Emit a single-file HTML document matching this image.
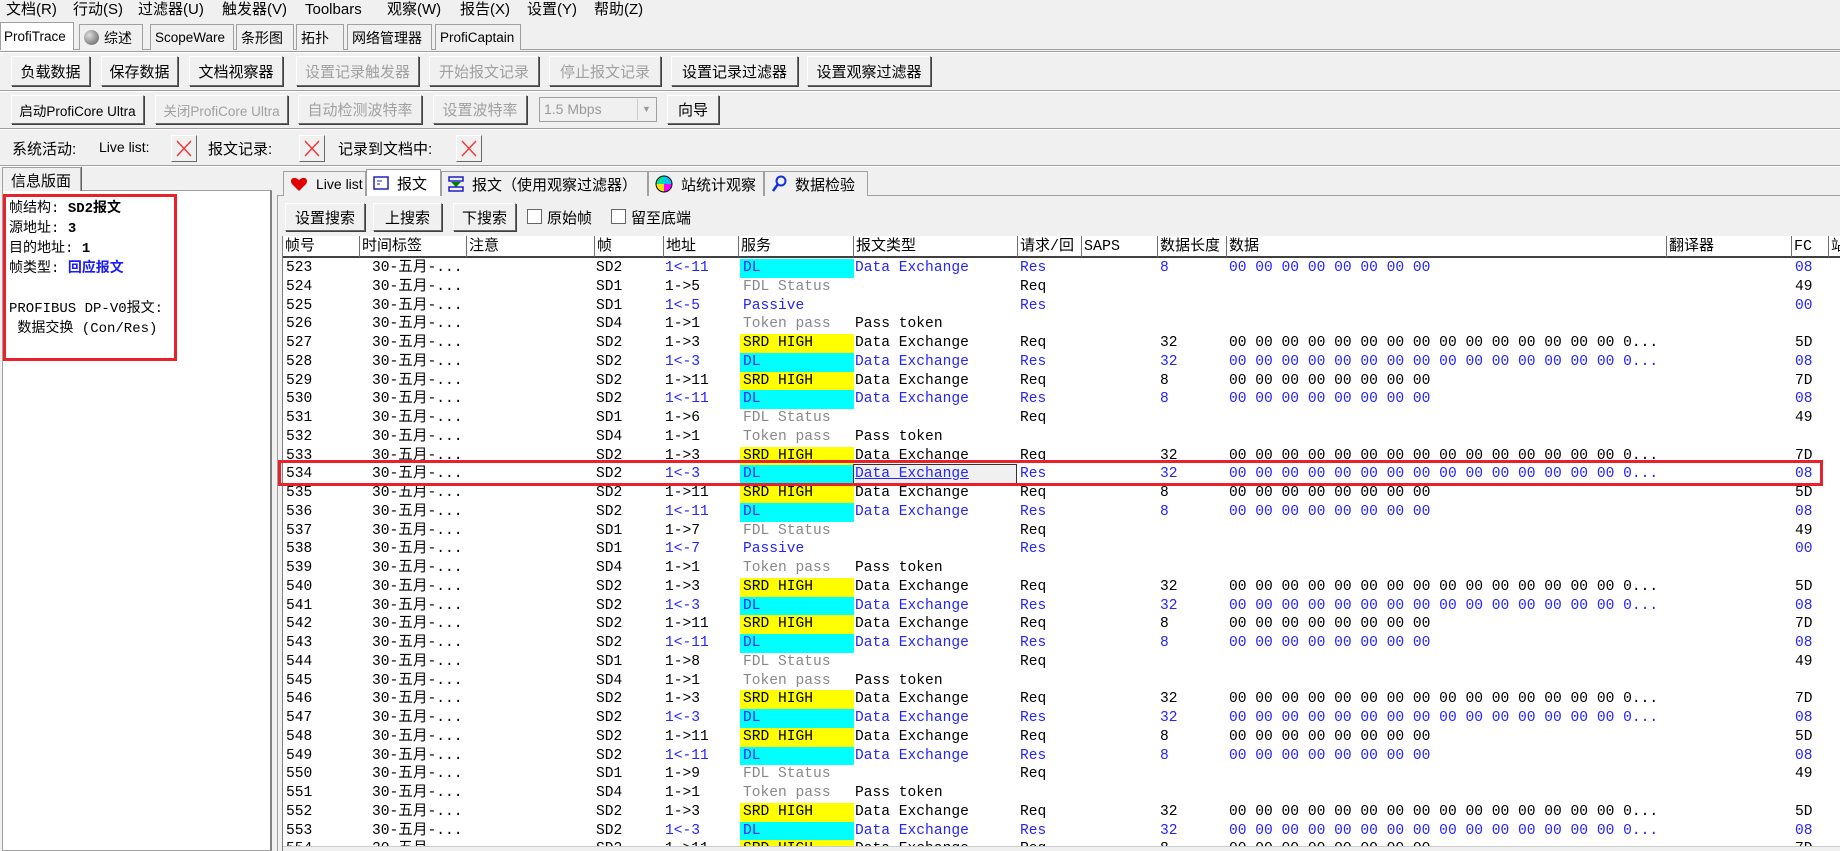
<!DOCTYPE html>
<html><head><meta charset="utf-8">
<style>
*{margin:0;padding:0;box-sizing:border-box}
body{width:1840px;height:851px;overflow:hidden;background:#f0f0f0;position:relative;font-family:"Liberation Sans","Noto Sans CJK SC",sans-serif;font-size:15px;color:#000}
.a{position:absolute;white-space:nowrap}
.mn{position:absolute;top:0;line-height:20px;font-size:15px;white-space:nowrap}
.btn{position:absolute;border:1px solid;border-color:#fff #696969 #696969 #fff;box-shadow:1px 1px 0 #404040;background:#f0f0f0;display:flex;align-items:center;justify-content:center;font-size:15px}
.dis{color:#a0a0a0}
.sep{position:absolute;left:0;width:1840px;height:2px;border-top:1px solid #a0a0a0;border-bottom:1px solid #fff}
.tab{position:absolute;top:24px;height:26px;border:1px solid #a0a0a0;border-bottom:none;background:#f0f0f0;display:flex;align-items:center;padding-left:4px;font-size:14px;overflow:hidden;white-space:nowrap}
.xb{position:absolute;top:135px;width:26px;height:27px;border:1px solid;border-color:#fff #696969 #696969 #fff;background:#f0f0f0}
.rt{position:absolute;top:171px;height:25px;border:1px solid #a0a0a0;border-bottom:none;background:#f0f0f0;display:flex;align-items:center;padding-left:6px;font-size:15px;white-space:nowrap;overflow:hidden}
.cb{position:absolute;top:209px;width:15px;height:15px;border:1px solid #666;background:#fff}
.m{font-family:"Liberation Mono","Noto Sans CJK SC",monospace;font-size:14.6px}
#tbl{position:absolute;left:282px;top:236px;width:1558px;height:615px;background:#fff;border-left:1px solid #808080;overflow:hidden}
.hd{position:absolute;top:0;height:22px;border-right:1px solid #707070;border-bottom:2px solid #404040;background:#fff;font-size:15px;padding-left:2px;line-height:21px;font-family:"Liberation Mono","Noto Sans CJK SC",monospace;overflow:hidden;white-space:nowrap}
.r{position:absolute;left:0;width:1558px;height:18.75px;line-height:18.75px}
.r span{position:absolute;top:0;font-family:"Liberation Mono","Noto Sans CJK SC",monospace;font-size:14.6px;white-space:nowrap}
.n{left:3px}.t{left:89px}.f{left:313px}.ad{left:382px}.sv{left:457px;width:114px;padding-left:3px}.ty{left:572px}.rq{left:737px}.ln{left:877px}.dt{left:946px}.fc{left:1512px}
.b{color:#2424ff}.g{color:#888}.cy{background:#00ffff}.ye{background:#ffff00}
</style></head><body>
<!-- menu -->
<div class="mn" style="left:6px">文档(R)</div>
<div class="mn" style="left:73px">行动(S)</div>
<div class="mn" style="left:138px">过滤器(U)</div>
<div class="mn" style="left:222px">触发器(V)</div>
<div class="mn" style="left:305px">Toolbars</div>
<div class="mn" style="left:387px">观察(W)</div>
<div class="mn" style="left:460px">报告(X)</div>
<div class="mn" style="left:527px">设置(Y)</div>
<div class="mn" style="left:594px">帮助(Z)</div>
<!-- top tabs -->
<div class="a" style="top:49px;left:0;width:1840px;height:1px;background:#a0a0a0"></div>
<div class="tab" style="left:0;width:74px;top:22px;height:28px;background:#fff;padding-left:3px;font-size:13.5px">ProfiTrace</div>
<div class="tab" style="left:79px;width:64px"><span style="display:inline-block;width:15px;height:15px;border-radius:50%;background:radial-gradient(circle at 35% 35%,#ddd,#555);margin-right:5px"></span>综述</div>
<div class="tab" style="left:150px;width:84px;font-size:13.5px">ScopeWare</div>
<div class="tab" style="left:236px;width:58px">条形图</div>
<div class="tab" style="left:296px;width:48px">拓扑</div>
<div class="tab" style="left:347px;width:85px">网络管理器</div>
<div class="tab" style="left:435px;width:86px;font-size:13.5px">ProfiCaptain</div>
<!-- toolbar 1 -->
<div class="sep" style="top:51px"></div>
<div class="btn" style="left:11px;top:56px;width:79px;height:30px">负载数据</div>
<div class="btn" style="left:101px;top:56px;width:77px;height:30px">保存数据</div>
<div class="btn" style="left:189px;top:56px;width:94px;height:30px">文档视察器</div>
<div class="btn dis" style="left:296px;top:56px;width:123px;height:30px">设置记录触发器</div>
<div class="btn dis" style="left:429px;top:56px;width:110px;height:30px">开始报文记录</div>
<div class="btn dis" style="left:549px;top:56px;width:112px;height:30px">停止报文记录</div>
<div class="btn" style="left:671px;top:56px;width:127px;height:30px">设置记录过滤器</div>
<div class="btn" style="left:807px;top:56px;width:124px;height:30px">设置观察过滤器</div>
<div class="sep" style="top:90px"></div>
<!-- toolbar 2 -->
<div class="btn" style="left:11px;top:95px;width:133px;height:29px;font-size:13.5px">启动ProfiCore Ultra</div>
<div class="btn dis" style="left:155px;top:95px;width:133px;height:29px;font-size:13.5px">关闭ProfiCore Ultra</div>
<div class="btn dis" style="left:298px;top:95px;width:124px;height:29px">自动检测波特率</div>
<div class="btn dis" style="left:433px;top:95px;width:94px;height:29px">设置波特率</div>
<div class="a" style="left:539px;top:97px;width:118px;height:25px;border:1px solid #a0a0a0;background:#f0f0f0;color:#999;font-size:14px;line-height:23px;padding-left:4px">1.5 Mbps<div style="position:absolute;right:1px;top:1px;width:18px;height:21px;border-left:1px solid #ccc;text-align:center;font-size:9px;line-height:21px">▼</div></div>
<div class="btn" style="left:667px;top:95px;width:52px;height:29px">向导</div>
<div class="sep" style="top:128px"></div>
<!-- status row -->
<div class="a" style="left:12px;top:138px;font-size:15px">系统活动:</div>
<div class="a" style="left:99px;top:139px;font-size:14px">Live list:</div>
<div class="a" style="left:208px;top:138px">报文记录:</div>
<div class="a" style="left:338px;top:138px">记录到文档中:</div>
<div class="xb" style="left:171px"><svg width="24" height="25"><path d="M5 5L19 20M19 5L5 20" stroke="#f03030" stroke-width="1.3"/></svg></div>
<div class="xb" style="left:299px"><svg width="24" height="25"><path d="M5 5L19 20M19 5L5 20" stroke="#f03030" stroke-width="1.3"/></svg></div>
<div class="xb" style="left:456px"><svg width="24" height="25"><path d="M5 5L19 20M19 5L5 20" stroke="#f03030" stroke-width="1.3"/></svg></div>
<div class="sep" style="top:165px"></div>
<!-- left panel -->
<div class="a" style="left:2px;top:190px;width:270px;height:661px;background:#fff;border:1px solid #a0a0a0;border-right:2px solid #808080"></div>
<div class="a" style="left:2px;top:167px;width:79px;height:24px;background:#f0f0f0;border:1px solid #a0a0a0;border-bottom:none;font-size:15px;padding:2px 0 0 8px;box-shadow:1px 0 0 #606060">信息版面</div>
<div class="a" style="left:3px;top:194px;width:174px;height:167px;border:3px solid #e8212b"></div>
<div class="a m" style="left:9px;top:199px;line-height:20px;font-size:14px">帧结构: <b>SD2报文</b><br>源地址: <b>3</b><br>目的地址: <b>1</b><br>帧类型: <b style="color:#1a1aff">回应报文</b><br><br>PROFIBUS DP-V0报文:<br>&nbsp;数据交换 (Con/Res)</div>
<!-- right pane -->
<div class="a" style="left:277px;top:195px;width:1563px;height:656px;border-left:1px solid #a0a0a0;border-top:1px solid #a0a0a0"></div>
<div class="rt" style="left:283px;width:83px"><svg width="18" height="16" style="margin-right:8px;flex:none"><path d="M9 15L2 8C-1 4 3 -1 9 4C15 -1 19 4 16 8Z" fill="#e00000"/></svg><span style="font-size:14px">Live list</span></div>
<div class="rt" style="left:366px;width:75px;top:169px;height:27px;background:#fff"><svg width="16" height="14" style="margin-right:8px;flex:none"><rect x="1" y="1" width="14" height="12" fill="none" stroke="#2020c0" stroke-width="1.5"/><path d="M4 5h5M4 8h3" stroke="#2020c0"/></svg>报文</div>
<div class="rt" style="left:441px;width:207px"><svg width="16" height="16" style="margin-right:8px;flex:none"><rect x="1" y="1" width="14" height="4" fill="none" stroke="#2020c0" stroke-width="1.5"/><path d="M3 6h10l-5 5z" fill="#008000"/><rect x="1" y="11" width="14" height="4" fill="none" stroke="#2020c0" stroke-width="1.5"/></svg>报文（使用观察过滤器）</div>
<div class="rt" style="left:648px;width:116px"><svg width="18" height="18" style="margin-right:8px;flex:none"><circle cx="9" cy="9" r="8" fill="#ff00ff"/><path d="M9 9L9 1A8 8 0 0 1 17 9Z" fill="#00c0ff"/><path d="M9 9L1 9A8 8 0 0 1 9 1Z" fill="#00e0a0"/><path d="M9 9L9 17A8 8 0 0 1 1 9Z" fill="#ffe000"/><circle cx="9" cy="9" r="8" fill="none" stroke="#000"/></svg>站统计观察</div>
<div class="rt" style="left:764px;width:104px"><svg width="16" height="18" style="margin-right:8px;flex:none"><circle cx="10" cy="6" r="4.5" fill="none" stroke="#1030e0" stroke-width="2"/><path d="M7 9L2 16" stroke="#1030e0" stroke-width="2.5"/></svg>数据检验</div>
<div class="btn" style="left:285px;top:203px;width:80px;height:28px">设置搜索</div>
<div class="btn" style="left:373px;top:203px;width:69px;height:28px">上搜索</div>
<div class="btn" style="left:453px;top:203px;width:63px;height:28px">下搜索</div>
<div class="cb" style="left:527px"></div><div class="a" style="left:547px;top:207px">原始帧</div>
<div class="cb" style="left:611px"></div><div class="a" style="left:631px;top:207px">留至底端</div>
<!-- table -->
<div id="tbl">
<div class="hd" style="left:0;width:77px">帧号</div>
<div class="hd" style="left:77px;width:107px">时间标签</div>
<div class="hd" style="left:184px;width:128px">注意</div>
<div class="hd" style="left:312px;width:69px">帧</div>
<div class="hd" style="left:381px;width:75px">地址</div>
<div class="hd" style="left:456px;width:115px">服务</div>
<div class="hd" style="left:571px;width:164px">报文类型</div>
<div class="hd" style="left:735px;width:64px">请求/回</div>
<div class="hd" style="left:799px;width:76px">SAPS</div>
<div class="hd" style="left:875px;width:69px">数据长度</div>
<div class="hd" style="left:944px;width:440px">数据</div>
<div class="hd" style="left:1384px;width:125px">翻译器</div>
<div class="hd" style="left:1509px;width:37px">FC</div>
<div class="hd" style="left:1546px;width:30px">站</div>
<div style="position:absolute;top:23px;left:0;width:1558px">
<div class="r" style="top:0px"><span class="n">523</span><span class="t">30-五月-...</span><span class="f">SD2</span><span class="ad b">1&lt;-11</span><span class="sv cy b">DL</span><span class="ty b">Data Exchange</span><span class="rq b">Res</span><span class="ln b">8</span><span class="dt b">00 00 00 00 00 00 00 00</span><span class="fc b">08</span></div>
<div class="r" style="top:18.75px"><span class="n">524</span><span class="t">30-五月-...</span><span class="f">SD1</span><span class="ad">1-&gt;5</span><span class="sv g">FDL Status</span><span class="rq">Req</span><span class="fc">49</span></div>
<div class="r" style="top:37.5px"><span class="n">525</span><span class="t">30-五月-...</span><span class="f">SD1</span><span class="ad b">1&lt;-5</span><span class="sv b">Passive</span><span class="rq b">Res</span><span class="fc b">00</span></div>
<div class="r" style="top:56.25px"><span class="n">526</span><span class="t">30-五月-...</span><span class="f">SD4</span><span class="ad">1-&gt;1</span><span class="sv g">Token pass</span><span class="ty">Pass token</span></div>
<div class="r" style="top:75px"><span class="n">527</span><span class="t">30-五月-...</span><span class="f">SD2</span><span class="ad">1-&gt;3</span><span class="sv ye">SRD HIGH</span><span class="ty">Data Exchange</span><span class="rq">Req</span><span class="ln">32</span><span class="dt">00 00 00 00 00 00 00 00 00 00 00 00 00 00 00 0...</span><span class="fc">5D</span></div>
<div class="r" style="top:93.75px"><span class="n">528</span><span class="t">30-五月-...</span><span class="f">SD2</span><span class="ad b">1&lt;-3</span><span class="sv cy b">DL</span><span class="ty b">Data Exchange</span><span class="rq b">Res</span><span class="ln b">32</span><span class="dt b">00 00 00 00 00 00 00 00 00 00 00 00 00 00 00 0...</span><span class="fc b">08</span></div>
<div class="r" style="top:112.5px"><span class="n">529</span><span class="t">30-五月-...</span><span class="f">SD2</span><span class="ad">1-&gt;11</span><span class="sv ye">SRD HIGH</span><span class="ty">Data Exchange</span><span class="rq">Req</span><span class="ln">8</span><span class="dt">00 00 00 00 00 00 00 00</span><span class="fc">7D</span></div>
<div class="r" style="top:131.25px"><span class="n">530</span><span class="t">30-五月-...</span><span class="f">SD2</span><span class="ad b">1&lt;-11</span><span class="sv cy b">DL</span><span class="ty b">Data Exchange</span><span class="rq b">Res</span><span class="ln b">8</span><span class="dt b">00 00 00 00 00 00 00 00</span><span class="fc b">08</span></div>
<div class="r" style="top:150px"><span class="n">531</span><span class="t">30-五月-...</span><span class="f">SD1</span><span class="ad">1-&gt;6</span><span class="sv g">FDL Status</span><span class="rq">Req</span><span class="fc">49</span></div>
<div class="r" style="top:168.75px"><span class="n">532</span><span class="t">30-五月-...</span><span class="f">SD4</span><span class="ad">1-&gt;1</span><span class="sv g">Token pass</span><span class="ty">Pass token</span></div>
<div class="r" style="top:187.5px"><span class="n">533</span><span class="t">30-五月-...</span><span class="f">SD2</span><span class="ad">1-&gt;3</span><span class="sv ye">SRD HIGH</span><span class="ty">Data Exchange</span><span class="rq">Req</span><span class="ln">32</span><span class="dt">00 00 00 00 00 00 00 00 00 00 00 00 00 00 00 0...</span><span class="fc">7D</span></div>
<div class="r" style="top:206.25px"><span class="n">534</span><span class="t">30-五月-...</span><span class="f">SD2</span><span class="ad b">1&lt;-3</span><span class="sv cy b">DL</span><span class="ty b" style="text-decoration:underline;background:#f0f0f0;outline:1px solid #333;width:162px;left:571px;padding-left:1px">Data Exchange</span><span class="rq b">Res</span><span class="ln b">32</span><span class="dt b">00 00 00 00 00 00 00 00 00 00 00 00 00 00 00 0...</span><span class="fc b">08</span></div>
<div class="r" style="top:225px"><span class="n">535</span><span class="t">30-五月-...</span><span class="f">SD2</span><span class="ad">1-&gt;11</span><span class="sv ye">SRD HIGH</span><span class="ty">Data Exchange</span><span class="rq">Req</span><span class="ln">8</span><span class="dt">00 00 00 00 00 00 00 00</span><span class="fc">5D</span></div>
<div class="r" style="top:243.75px"><span class="n">536</span><span class="t">30-五月-...</span><span class="f">SD2</span><span class="ad b">1&lt;-11</span><span class="sv cy b">DL</span><span class="ty b">Data Exchange</span><span class="rq b">Res</span><span class="ln b">8</span><span class="dt b">00 00 00 00 00 00 00 00</span><span class="fc b">08</span></div>
<div class="r" style="top:262.5px"><span class="n">537</span><span class="t">30-五月-...</span><span class="f">SD1</span><span class="ad">1-&gt;7</span><span class="sv g">FDL Status</span><span class="rq">Req</span><span class="fc">49</span></div>
<div class="r" style="top:281.25px"><span class="n">538</span><span class="t">30-五月-...</span><span class="f">SD1</span><span class="ad b">1&lt;-7</span><span class="sv b">Passive</span><span class="rq b">Res</span><span class="fc b">00</span></div>
<div class="r" style="top:300px"><span class="n">539</span><span class="t">30-五月-...</span><span class="f">SD4</span><span class="ad">1-&gt;1</span><span class="sv g">Token pass</span><span class="ty">Pass token</span></div>
<div class="r" style="top:318.75px"><span class="n">540</span><span class="t">30-五月-...</span><span class="f">SD2</span><span class="ad">1-&gt;3</span><span class="sv ye">SRD HIGH</span><span class="ty">Data Exchange</span><span class="rq">Req</span><span class="ln">32</span><span class="dt">00 00 00 00 00 00 00 00 00 00 00 00 00 00 00 0...</span><span class="fc">5D</span></div>
<div class="r" style="top:337.5px"><span class="n">541</span><span class="t">30-五月-...</span><span class="f">SD2</span><span class="ad b">1&lt;-3</span><span class="sv cy b">DL</span><span class="ty b">Data Exchange</span><span class="rq b">Res</span><span class="ln b">32</span><span class="dt b">00 00 00 00 00 00 00 00 00 00 00 00 00 00 00 0...</span><span class="fc b">08</span></div>
<div class="r" style="top:356.25px"><span class="n">542</span><span class="t">30-五月-...</span><span class="f">SD2</span><span class="ad">1-&gt;11</span><span class="sv ye">SRD HIGH</span><span class="ty">Data Exchange</span><span class="rq">Req</span><span class="ln">8</span><span class="dt">00 00 00 00 00 00 00 00</span><span class="fc">7D</span></div>
<div class="r" style="top:375px"><span class="n">543</span><span class="t">30-五月-...</span><span class="f">SD2</span><span class="ad b">1&lt;-11</span><span class="sv cy b">DL</span><span class="ty b">Data Exchange</span><span class="rq b">Res</span><span class="ln b">8</span><span class="dt b">00 00 00 00 00 00 00 00</span><span class="fc b">08</span></div>
<div class="r" style="top:393.75px"><span class="n">544</span><span class="t">30-五月-...</span><span class="f">SD1</span><span class="ad">1-&gt;8</span><span class="sv g">FDL Status</span><span class="rq">Req</span><span class="fc">49</span></div>
<div class="r" style="top:412.5px"><span class="n">545</span><span class="t">30-五月-...</span><span class="f">SD4</span><span class="ad">1-&gt;1</span><span class="sv g">Token pass</span><span class="ty">Pass token</span></div>
<div class="r" style="top:431.25px"><span class="n">546</span><span class="t">30-五月-...</span><span class="f">SD2</span><span class="ad">1-&gt;3</span><span class="sv ye">SRD HIGH</span><span class="ty">Data Exchange</span><span class="rq">Req</span><span class="ln">32</span><span class="dt">00 00 00 00 00 00 00 00 00 00 00 00 00 00 00 0...</span><span class="fc">7D</span></div>
<div class="r" style="top:450px"><span class="n">547</span><span class="t">30-五月-...</span><span class="f">SD2</span><span class="ad b">1&lt;-3</span><span class="sv cy b">DL</span><span class="ty b">Data Exchange</span><span class="rq b">Res</span><span class="ln b">32</span><span class="dt b">00 00 00 00 00 00 00 00 00 00 00 00 00 00 00 0...</span><span class="fc b">08</span></div>
<div class="r" style="top:468.75px"><span class="n">548</span><span class="t">30-五月-...</span><span class="f">SD2</span><span class="ad">1-&gt;11</span><span class="sv ye">SRD HIGH</span><span class="ty">Data Exchange</span><span class="rq">Req</span><span class="ln">8</span><span class="dt">00 00 00 00 00 00 00 00</span><span class="fc">5D</span></div>
<div class="r" style="top:487.5px"><span class="n">549</span><span class="t">30-五月-...</span><span class="f">SD2</span><span class="ad b">1&lt;-11</span><span class="sv cy b">DL</span><span class="ty b">Data Exchange</span><span class="rq b">Res</span><span class="ln b">8</span><span class="dt b">00 00 00 00 00 00 00 00</span><span class="fc b">08</span></div>
<div class="r" style="top:506.25px"><span class="n">550</span><span class="t">30-五月-...</span><span class="f">SD1</span><span class="ad">1-&gt;9</span><span class="sv g">FDL Status</span><span class="rq">Req</span><span class="fc">49</span></div>
<div class="r" style="top:525px"><span class="n">551</span><span class="t">30-五月-...</span><span class="f">SD4</span><span class="ad">1-&gt;1</span><span class="sv g">Token pass</span><span class="ty">Pass token</span></div>
<div class="r" style="top:543.75px"><span class="n">552</span><span class="t">30-五月-...</span><span class="f">SD2</span><span class="ad">1-&gt;3</span><span class="sv ye">SRD HIGH</span><span class="ty">Data Exchange</span><span class="rq">Req</span><span class="ln">32</span><span class="dt">00 00 00 00 00 00 00 00 00 00 00 00 00 00 00 0...</span><span class="fc">5D</span></div>
<div class="r" style="top:562.5px"><span class="n">553</span><span class="t">30-五月-...</span><span class="f">SD2</span><span class="ad b">1&lt;-3</span><span class="sv cy b">DL</span><span class="ty b">Data Exchange</span><span class="rq b">Res</span><span class="ln b">32</span><span class="dt b">00 00 00 00 00 00 00 00 00 00 00 00 00 00 00 0...</span><span class="fc b">08</span></div>
<div class="r" style="top:581.25px"><span class="n">554</span><span class="t">30-五月-...</span><span class="f">SD2</span><span class="ad">1-&gt;11</span><span class="sv ye">SRD HIGH</span><span class="ty">Data Exchange</span><span class="rq">Req</span><span class="ln">8</span><span class="dt">00 00 00 00 00 00 00 00</span><span class="fc">7D</span></div>
</div>
<div style="position:absolute;left:0;top:610px;width:1558px;height:5px;background:#f0f0f0;border-top:1px solid #ccc"></div>
</div>
<!-- red highlight -->
<div class="a" style="left:278px;top:460px;width:1545px;height:26px;border:3px solid #e8212b"></div>
</body></html>
